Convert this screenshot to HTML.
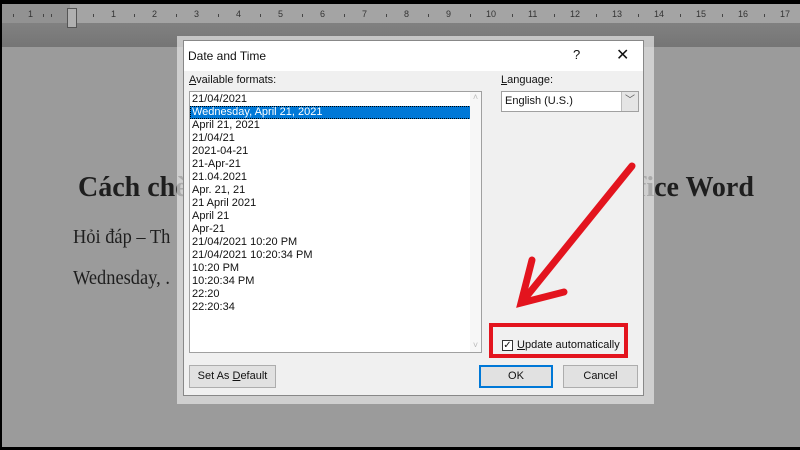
<!DOCTYPE html>
<html><head><meta charset="utf-8"><style>
*{margin:0;padding:0;box-sizing:border-box}
body{width:800px;height:450px;overflow:hidden;background:#9b9b9b;position:relative;font-family:"Liberation Sans",sans-serif}
.abs{position:absolute}
.ser{font-family:"Liberation Serif",serif;color:#1e1e1e;position:absolute;white-space:nowrap}
.dlg{font-family:"Liberation Sans",sans-serif;font-size:11px;color:#111}
.btn{position:absolute;background:#e1e1e1;border:1px solid #adadad;text-align:center;line-height:20px;font-size:11px}
.li{height:13px;line-height:13px;padding-left:2px;white-space:nowrap}
.r{position:absolute;top:10px;font-size:9px;color:#333;line-height:1}
.t{position:absolute;top:14px;width:1px;height:3px;background:#444}
</style></head><body>
<div class="abs" style="left:0;top:0;width:800px;height:4px;background:#000"></div>
<div class="abs" style="left:0;top:4px;width:800px;height:19px;background:#a4a4a4"></div>
<div class="abs" style="left:0;top:4px;width:70px;height:19px;background:#929292"></div>
<div class="abs" style="left:0;top:23px;width:800px;height:24px;background:linear-gradient(#818181,#757575)"></div>
<span class="r" style="left:28px">1</span>
<span class="r" style="left:111px">1</span><span class="r" style="left:152px">2</span><span class="r" style="left:194px">3</span><span class="r" style="left:236px">4</span><span class="r" style="left:278px">5</span><span class="r" style="left:320px">6</span><span class="r" style="left:362px">7</span><span class="r" style="left:404px">8</span><span class="r" style="left:446px">9</span><span class="r" style="left:486px">10</span><span class="r" style="left:528px">11</span><span class="r" style="left:570px">12</span><span class="r" style="left:612px">13</span><span class="r" style="left:654px">14</span><span class="r" style="left:696px">15</span><span class="r" style="left:738px">16</span><span class="r" style="left:780px">17</span>
<div class="t" style="left:13px"></div><div class="t" style="left:43px"></div><div class="t" style="left:51px"></div><div class="t" style="left:93px"></div>
<div class="t" style="left:134px"></div><div class="t" style="left:176px"></div><div class="t" style="left:218px"></div><div class="t" style="left:260px"></div><div class="t" style="left:302px"></div><div class="t" style="left:344px"></div><div class="t" style="left:386px"></div><div class="t" style="left:428px"></div><div class="t" style="left:470px"></div><div class="t" style="left:512px"></div><div class="t" style="left:554px"></div><div class="t" style="left:596px"></div><div class="t" style="left:638px"></div><div class="t" style="left:680px"></div><div class="t" style="left:722px"></div><div class="t" style="left:764px"></div>
<div class="abs" style="left:67px;top:8px;width:10px;height:20px;border:1px solid #555;background:#b0b0b0"></div>
<div class="abs" style="left:0;top:0;width:2px;height:450px;background:#000"></div>
<div class="abs" style="left:0;top:447px;width:800px;height:3px;background:#000"></div>
<div class="ser" style="left:78px;top:172px;font-size:28px;font-weight:bold">Cách chèn</div>
<div class="ser" style="left:637px;top:172px;font-size:28px;font-weight:bold">fice Word</div>
<div class="ser" style="left:73px;top:226px;font-size:20px;transform:scaleX(.92);transform-origin:left">Hỏi đáp – Th</div>
<div class="ser" style="left:73px;top:267px;font-size:20px;transform:scaleX(.92);transform-origin:left">Wednesday, .</div>
<div class="abs" style="left:177px;top:36px;width:477px;height:368px;background:#e6e6e6;opacity:.7"></div>
<div class="abs dlg" style="left:183px;top:40px;width:461px;height:356px;background:#f0f0f0;border:1px solid #888">
 <div style="height:30px;background:#fff;position:relative">
  <span style="position:absolute;left:4px;top:8px;font-size:12px">Date and Time</span>
  <span style="position:absolute;left:389px;top:6px;font-size:13px">?</span>
  <span style="position:absolute;left:432px;top:4px;font-size:16px">✕</span>
 </div>
 <div class="abs" style="left:5px;top:33px"><u>A</u>vailable formats:</div>
 <div class="abs" style="left:317px;top:33px"><u>L</u>anguage:</div>
 <div class="abs" style="left:5px;top:50px;width:293px;height:262px;background:#fff;border:1px solid #a0a0a0;padding-top:1px">
  <div class="li">21/04/2021</div>
  <div class="li" style="background:#0078d7;color:#fff;outline:1px dotted #000;outline-offset:-1px;width:281px">Wednesday, April 21, 2021</div>
  <div class="li">April 21, 2021</div><div class="li">21/04/21</div><div class="li">2021-04-21</div><div class="li">21-Apr-21</div><div class="li">21.04.2021</div><div class="li">Apr. 21, 21</div><div class="li">21 April 2021</div><div class="li">April 21</div><div class="li">Apr-21</div><div class="li">21/04/2021 10:20 PM</div><div class="li">21/04/2021 10:20:34 PM</div><div class="li">10:20 PM</div><div class="li">10:20:34 PM</div><div class="li">22:20</div><div class="li">22:20:34</div>
  <div class="abs" style="right:0;top:0;width:11px;height:260px;background:#f7f7f7;color:#bbb;font-size:9px;text-align:center">˄<div style="position:absolute;bottom:2px;width:11px">˅</div></div>
 </div>
 <div class="abs" style="left:317px;top:50px;width:138px;height:21px;background:#fff;border:1px solid #a0a0a0;padding:3px 3px">English (U.S.)
  <div class="abs" style="right:0;top:0;width:17px;height:19px;background:#e5e5e5;border-left:1px solid #bbb;text-align:center;color:#555;font-size:10px;line-height:18px">﹀</div></div>
 <div class="abs" style="left:318px;top:299px;width:11px;height:11px;border:1px solid #333;background:#fff;font-size:10px;line-height:9px;text-align:center">✓</div>
 <div class="abs" style="left:333px;top:298px"><u>U</u>pdate automatically</div>
 <div class="btn" style="left:5px;top:324px;width:87px;height:23px">Set As <u>D</u>efault</div>
 <div class="btn" style="left:295px;top:324px;width:74px;height:23px;border:2px solid #0078d7;line-height:19px">OK</div>
 <div class="btn" style="left:379px;top:324px;width:75px;height:23px">Cancel</div>
</div>
<div class="abs" style="left:489px;top:323px;width:139px;height:35px;border:4px solid #e3141e"></div>
<svg class="abs" style="left:0;top:0" width="800" height="450"><g stroke="#e3141e" stroke-width="7" stroke-linecap="round" fill="none"><path d="M632 166 L522 302"/><path d="M532 260 L521 303 L564 292"/></g></svg>
</body></html>
